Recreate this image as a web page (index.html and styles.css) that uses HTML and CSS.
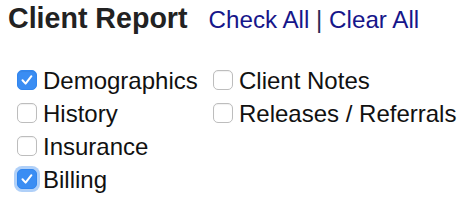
FILE: index.html
```html
<!doctype html>
<html lang="en">
  <head>
    <meta charset="UTF-8" />
    <title>Client Report</title>
    <link rel="stylesheet" href="styles.css">
  </head>
  <body>
    <main class="report">
      <header class="report-head">
        <h1 class="title">Client Report</h1>
        <nav class="bulk">
          <a href="#" class="bulk-link">Check All</a>
          <span class="sep">|</span>
          <a href="#" class="bulk-link">Clear All</a>
        </nav>
      </header>

      <div class="options">
        <label class="opt"><input type="checkbox" checked> Demographics</label>
        <label class="opt"><input type="checkbox"> Client Notes</label>
        <label class="opt"><input type="checkbox"> History</label>
        <label class="opt"><input type="checkbox"> Releases / Referrals</label>
        <label class="opt"><input type="checkbox"> Insurance</label>
        <span></span>
        <label class="opt"><input type="checkbox" class="focused" checked> Billing</label>
      </div>
    </main>
  </body>
</html>
```

FILE: styles.css
```css
body {
  margin: 0;
  padding: 0;
  background-color: #fff;
  color: #111;
  font-family: "Liberation Sans", Arial, Helvetica, sans-serif;
}

.report {
  padding: 0 0 0 8px;
}

.report-head {
  display: flex;
  align-items: baseline;
  padding-top: 2px;
}

.title {
  margin: 0;
  font-size: 28.6px;
  line-height: 32px;
  font-weight: bold;
  color: #222;
}

.bulk {
  margin-left: 21px;
  font-size: 24.2px;
  line-height: 32px;
}

.bulk-link {
  color: #16168a;
  text-decoration: none;
}

.sep {
  color: #2a2a55;
}

.options {
  display: grid;
  grid-template-columns: 196px auto;
  margin-top: 28px;
  padding-left: 9px;
  font-size: 24px;
  line-height: 33px;
}

.opt {
  display: flex;
  align-items: center;
  white-space: nowrap;
}

.opt input {
  appearance: none;
  -webkit-appearance: none;
  box-sizing: border-box;
  width: 20px;
  height: 20px;
  margin: 0 6px 2px 0;
  border: 1px solid #bdbdbd;
  border-radius: 5px;
  background: #fff;
  box-shadow: inset 0 1px 1px rgba(0, 0, 0, 0.06);
  flex-shrink: 0;
}

.opt input:checked {
  border-color: #3186ef;
  background: #3a8df3 url("data:image/svg+xml,%3Csvg xmlns='http://www.w3.org/2000/svg' viewBox='0 0 20 20'%3E%3Cpath d='M5.5 10.3 L8.6 13.6 L14.4 6.2' fill='none' stroke='white' stroke-width='2' stroke-linecap='round' stroke-linejoin='round'/%3E%3C/svg%3E") center / 20px 20px no-repeat;
}

.opt input.focused {
  box-shadow: 0 0 0 3px rgba(80, 150, 240, 0.45);
}
```
